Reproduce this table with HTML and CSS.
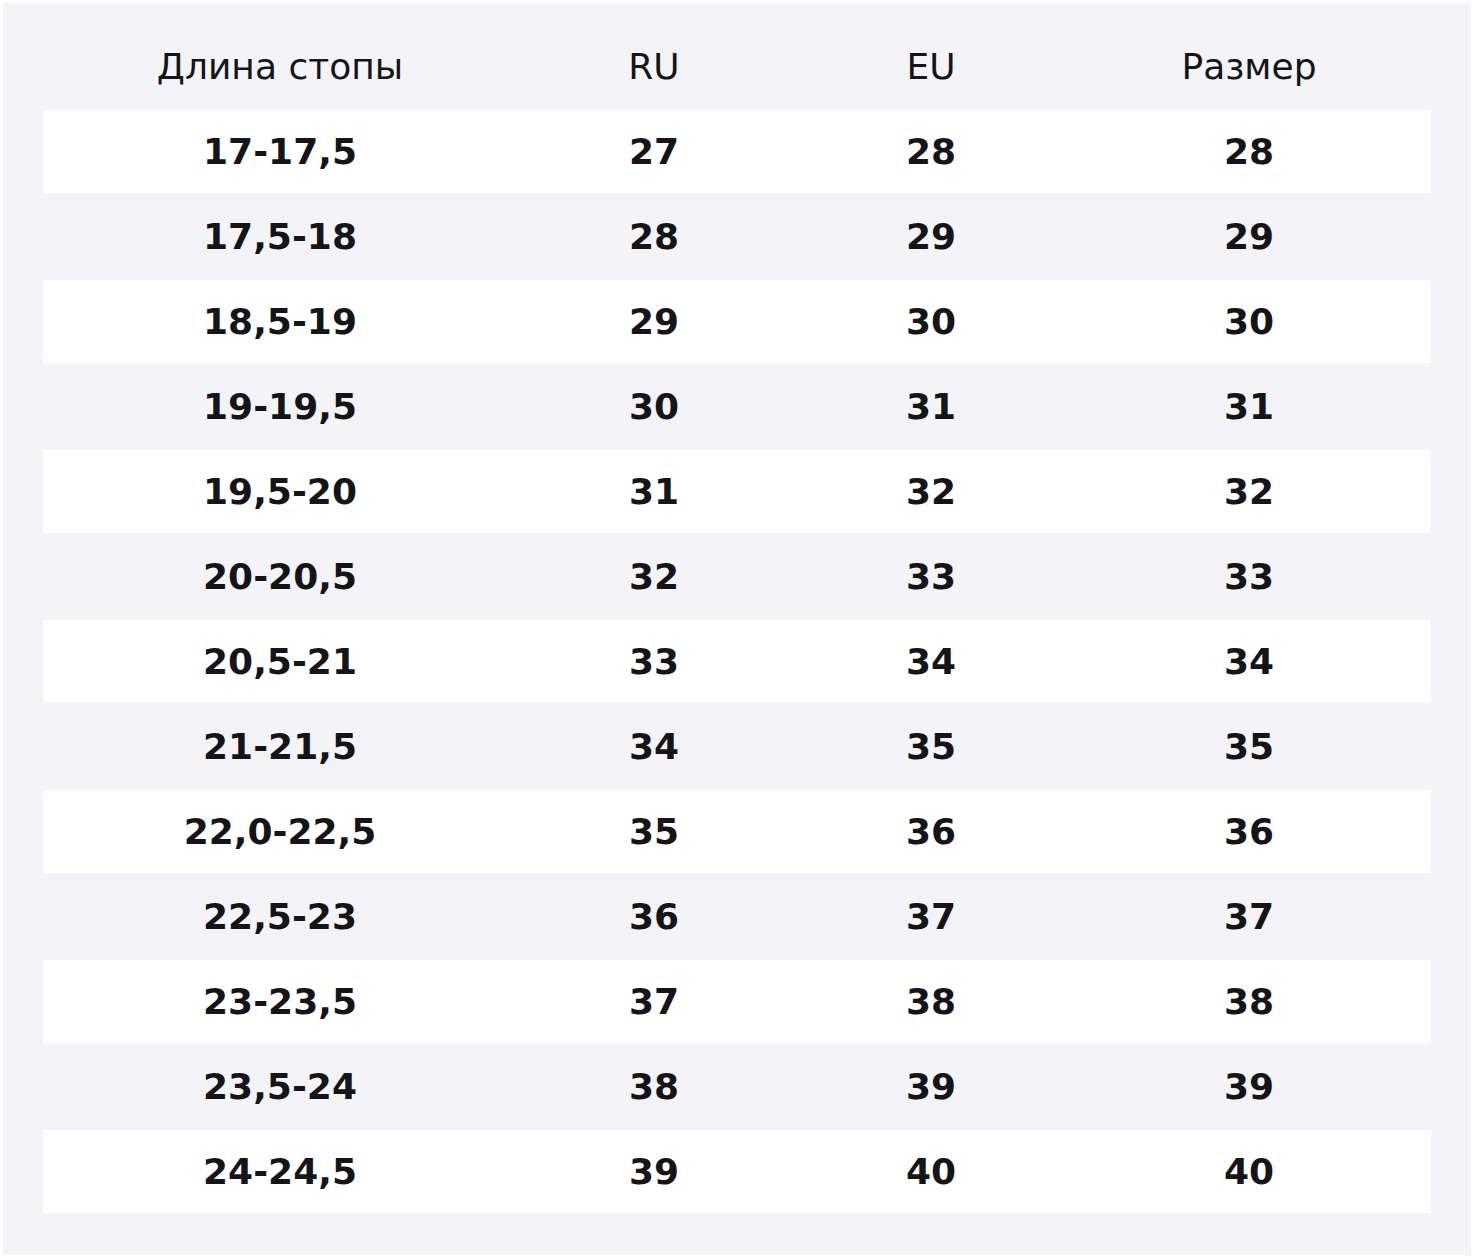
FILE: index.html
```html
<!DOCTYPE html>
<html lang="ru">
<head>
<meta charset="utf-8">
<title>Таблица размеров</title>
<link rel="stylesheet" href="styles.css">
</head>
<body>
<div class="chart">
  <div class="row head">
    <div class="cell">Длина стопы</div>
    <div class="cell">RU</div>
    <div class="cell">EU</div>
    <div class="cell">Размер</div>
  </div>
  <div class="rows">
    <div class="row odd"><div class="cell">17-17,5</div><div class="cell">27</div><div class="cell">28</div><div class="cell">28</div></div>
    <div class="row"><div class="cell">17,5-18</div><div class="cell">28</div><div class="cell">29</div><div class="cell">29</div></div>
    <div class="row odd"><div class="cell">18,5-19</div><div class="cell">29</div><div class="cell">30</div><div class="cell">30</div></div>
    <div class="row"><div class="cell">19-19,5</div><div class="cell">30</div><div class="cell">31</div><div class="cell">31</div></div>
    <div class="row odd"><div class="cell">19,5-20</div><div class="cell">31</div><div class="cell">32</div><div class="cell">32</div></div>
    <div class="row"><div class="cell">20-20,5</div><div class="cell">32</div><div class="cell">33</div><div class="cell">33</div></div>
    <div class="row odd"><div class="cell">20,5-21</div><div class="cell">33</div><div class="cell">34</div><div class="cell">34</div></div>
    <div class="row"><div class="cell">21-21,5</div><div class="cell">34</div><div class="cell">35</div><div class="cell">35</div></div>
    <div class="row odd"><div class="cell">22,0-22,5</div><div class="cell">35</div><div class="cell">36</div><div class="cell">36</div></div>
    <div class="row"><div class="cell">22,5-23</div><div class="cell">36</div><div class="cell">37</div><div class="cell">37</div></div>
    <div class="row odd"><div class="cell">23-23,5</div><div class="cell">37</div><div class="cell">38</div><div class="cell">38</div></div>
    <div class="row"><div class="cell">23,5-24</div><div class="cell">38</div><div class="cell">39</div><div class="cell">39</div></div>
    <div class="row odd"><div class="cell">24-24,5</div><div class="cell">39</div><div class="cell">40</div><div class="cell">40</div></div>
  </div>
</div>
</body>
</html>
```

FILE: styles.css
```css
html, body {
  margin: 0;
  padding: 0;
  background: #ffffff;
}
body {
  padding: 3px;
  font-family: "DejaVu Sans", "Noto Sans", sans-serif;
  color: #141419;
}
.chart {
  width: 1468px;
  height: 1252px;
  box-sizing: border-box;
  background: #f4f4f8;
  padding: 0 40px 42px 40px;
}
.row {
  display: grid;
  grid-template-columns: 474px 274px 280px 356px;
  height: 83px;
  align-items: center;
  text-align: center;
  font-size: 36px;
  font-weight: bold;
}
.row.head {
  height: 107px;
  box-sizing: border-box;
  padding-top: 20px;
  font-weight: normal;
}
.rows {
  display: flex;
  flex-direction: column;
  gap: 2px;
}
.row.odd {
  background: #ffffff;
}
```
